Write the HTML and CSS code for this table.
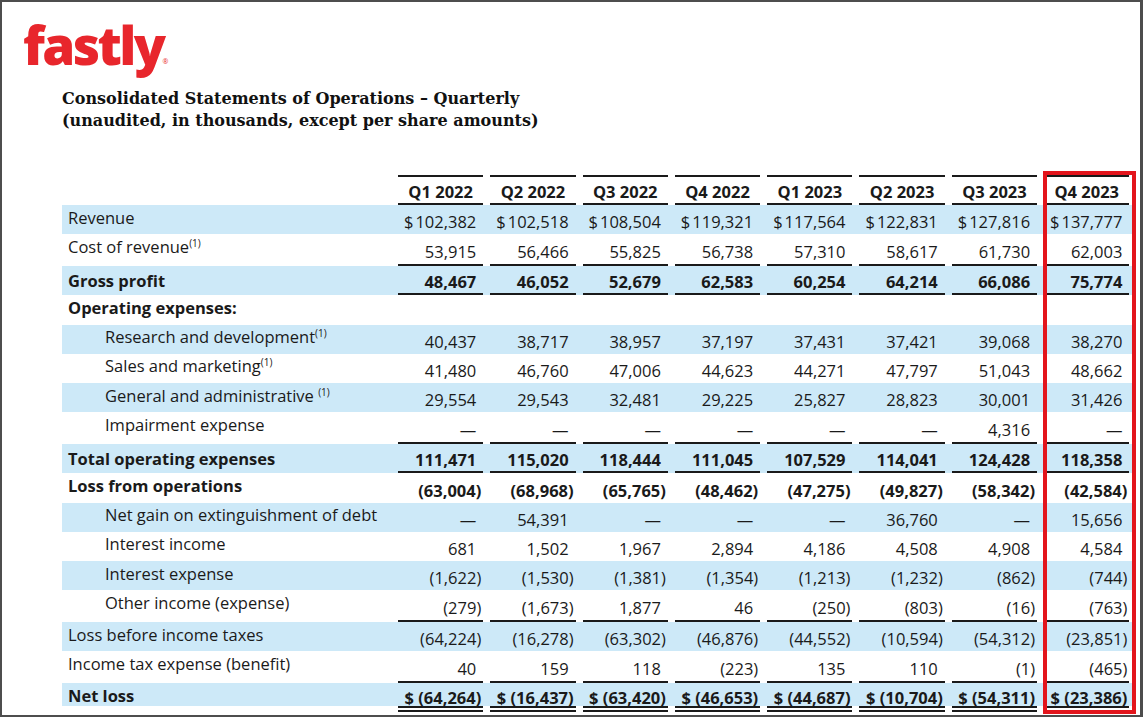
FILE: index.html
```html
<!DOCTYPE html>
<html lang="en">
<head>
<meta charset="utf-8">
<title>Fastly – Consolidated Statements of Operations – Quarterly</title>
<link rel="stylesheet" href="styles.css">
</head>
<body>
<div class="frame">
  <div class="brand"><span class="logo">fastly</span><span class="reg">®</span></div>
  <h1 class="title">Consolidated Statements of Operations – Quarterly<br>(unaudited, in thousands, except per share amounts)</h1>

  <div class="table">
    <div class="row head">
      <div></div>
      <div class="num">Q1 2022</div><div class="num">Q2 2022</div><div class="num">Q3 2022</div><div class="num">Q4 2022</div>
      <div class="num">Q1 2023</div><div class="num">Q2 2023</div><div class="num">Q3 2023</div><div class="num">Q4 2023</div>
    </div>

    <div class="row blue">
      <div class="lbl">Revenue</div>
      <div class="num"><span class="cur">$</span>102,382</div><div class="num"><span class="cur">$</span>102,518</div>
      <div class="num"><span class="cur">$</span>108,504</div><div class="num"><span class="cur">$</span>119,321</div>
      <div class="num"><span class="cur">$</span>117,564</div><div class="num"><span class="cur">$</span>122,831</div>
      <div class="num"><span class="cur">$</span>127,816</div><div class="num"><span class="cur">$</span>137,777</div>
    </div>

    <div class="row tall ul">
      <div class="lbl">Cost of revenue<sup class="fn">(1)</sup></div>
      <div class="num">53,915</div><div class="num">56,466</div><div class="num">55,825</div><div class="num">56,738</div>
      <div class="num">57,310</div><div class="num">58,617</div><div class="num">61,730</div><div class="num">62,003</div>
    </div>

    <div class="row blue ul bold sum">
      <div class="lbl">Gross profit</div>
      <div class="num">48,467</div><div class="num">46,052</div><div class="num">52,679</div><div class="num">62,583</div>
      <div class="num">60,254</div><div class="num">64,214</div><div class="num">66,086</div><div class="num">75,774</div>
    </div>

    <div class="row bold">
      <div class="lbl">Operating expenses:</div>
    </div>

    <div class="row blue">
      <div class="lbl ind">Research and development<sup class="fn">(1)</sup></div>
      <div class="num">40,437</div><div class="num">38,717</div><div class="num">38,957</div><div class="num">37,197</div>
      <div class="num">37,431</div><div class="num">37,421</div><div class="num">39,068</div><div class="num">38,270</div>
    </div>

    <div class="row">
      <div class="lbl ind">Sales and marketing<sup class="fn">(1)</sup></div>
      <div class="num">41,480</div><div class="num">46,760</div><div class="num">47,006</div><div class="num">44,623</div>
      <div class="num">44,271</div><div class="num">47,797</div><div class="num">51,043</div><div class="num">48,662</div>
    </div>

    <div class="row blue">
      <div class="lbl ind">General and administrative <sup class="fn">(1)</sup></div>
      <div class="num">29,554</div><div class="num">29,543</div><div class="num">32,481</div><div class="num">29,225</div>
      <div class="num">25,827</div><div class="num">28,823</div><div class="num">30,001</div><div class="num">31,426</div>
    </div>

    <div class="row tall ul">
      <div class="lbl ind">Impairment expense</div>
      <div class="num">—</div><div class="num">—</div><div class="num">—</div><div class="num">—</div>
      <div class="num">—</div><div class="num">—</div><div class="num">4,316</div><div class="num">—</div>
    </div>

    <div class="row blue ul bold sum">
      <div class="lbl">Total operating expenses</div>
      <div class="num">111,471</div><div class="num">115,020</div><div class="num">118,444</div><div class="num">111,045</div>
      <div class="num">107,529</div><div class="num">114,041</div><div class="num">124,428</div><div class="num">118,358</div>
    </div>

    <div class="row bold">
      <div class="lbl">Loss from operations</div>
      <div class="num"><span class="neg">(63,004)</span></div><div class="num"><span class="neg">(68,968)</span></div>
      <div class="num"><span class="neg">(65,765)</span></div><div class="num"><span class="neg">(48,462)</span></div>
      <div class="num"><span class="neg">(47,275)</span></div><div class="num"><span class="neg">(49,827)</span></div>
      <div class="num"><span class="neg">(58,342)</span></div><div class="num"><span class="neg">(42,584)</span></div>
    </div>

    <div class="row blue">
      <div class="lbl ind">Net gain on extinguishment of debt</div>
      <div class="num">—</div><div class="num">54,391</div><div class="num">—</div><div class="num">—</div>
      <div class="num">—</div><div class="num">36,760</div><div class="num">—</div><div class="num">15,656</div>
    </div>

    <div class="row">
      <div class="lbl ind">Interest income</div>
      <div class="num">681</div><div class="num">1,502</div><div class="num">1,967</div><div class="num">2,894</div>
      <div class="num">4,186</div><div class="num">4,508</div><div class="num">4,908</div><div class="num">4,584</div>
    </div>

    <div class="row blue">
      <div class="lbl ind">Interest expense</div>
      <div class="num"><span class="neg">(1,622)</span></div><div class="num"><span class="neg">(1,530)</span></div>
      <div class="num"><span class="neg">(1,381)</span></div><div class="num"><span class="neg">(1,354)</span></div>
      <div class="num"><span class="neg">(1,213)</span></div><div class="num"><span class="neg">(1,232)</span></div>
      <div class="num"><span class="neg">(862)</span></div><div class="num"><span class="neg">(744)</span></div>
    </div>

    <div class="row tall ul">
      <div class="lbl ind">Other income (expense)</div>
      <div class="num"><span class="neg">(279)</span></div><div class="num"><span class="neg">(1,673)</span></div>
      <div class="num">1,877</div><div class="num">46</div>
      <div class="num"><span class="neg">(250)</span></div><div class="num"><span class="neg">(803)</span></div>
      <div class="num"><span class="neg">(16)</span></div><div class="num"><span class="neg">(763)</span></div>
    </div>

    <div class="row blue">
      <div class="lbl">Loss before income taxes</div>
      <div class="num"><span class="neg">(64,224)</span></div><div class="num"><span class="neg">(16,278)</span></div>
      <div class="num"><span class="neg">(63,302)</span></div><div class="num"><span class="neg">(46,876)</span></div>
      <div class="num"><span class="neg">(44,552)</span></div><div class="num"><span class="neg">(10,594)</span></div>
      <div class="num"><span class="neg">(54,312)</span></div><div class="num"><span class="neg">(23,851)</span></div>
    </div>

    <div class="row tall ul">
      <div class="lbl">Income tax expense (benefit)</div>
      <div class="num">40</div><div class="num">159</div><div class="num">118</div><div class="num"><span class="neg">(223)</span></div>
      <div class="num">135</div><div class="num">110</div><div class="num"><span class="neg">(1)</span></div><div class="num"><span class="neg">(465)</span></div>
    </div>

    <div class="row net bold">
      <div class="lbl">Net loss</div>
      <div class="num"><span class="neg">$ (64,264)</span></div><div class="num"><span class="neg">$ (16,437)</span></div>
      <div class="num"><span class="neg">$ (63,420)</span></div><div class="num"><span class="neg">$ (46,653)</span></div>
      <div class="num"><span class="neg">$ (44,687)</span></div><div class="num"><span class="neg">$ (10,704)</span></div>
      <div class="num"><span class="neg">$ (54,311)</span></div><div class="num"><span class="neg">$ (23,386)</span></div>
    </div>
  </div>

  <div class="highlight"></div>
</div>
</body>
</html>
```

FILE: styles.css
```css
* { box-sizing: border-box; }

html, body {
  margin: 0;
  padding: 0;
  background: #ffffff;
}

body {
  font-family: "Open Sans", "Liberation Sans", sans-serif;
  color: #1a1a1a;
}

.frame {
  position: relative;
  width: 1143px;
  height: 717px;
  border: 2px solid #4d4d4d;
  border-right-width: 3px;
  overflow: hidden;
  background: #ffffff;
}

.brand {
  margin: 17px 0 0 21px;
  height: 52px;
  display: flex;
  align-items: flex-start;
}

.logo {
  font-family: "Open Sans", "Liberation Sans", sans-serif;
  font-weight: 800;
  font-size: 53px;
  line-height: 52px;
  letter-spacing: -2.6px;
  color: #e8262c;
}

.reg {
  font-size: 7px;
  line-height: 7px;
  color: #e8262c;
  margin: 39px 0 0 -1px;
}

.title {
  margin: 16.5px 0 0 60px;
  font-family: "DejaVu Serif", serif;
  font-weight: 700;
  font-size: 16px;
  line-height: 22px;
  color: #111111;
}

.table {
  margin: 43.5px 0 0 60px;
  width: 1073px;
}

.row {
  display: grid;
  grid-template-columns: 329px repeat(8, 85.3px);
  column-gap: 7px;
  height: 29.2px;
  font-size: 16.5px;
  line-height: 20px;
}

.row.blue { background: #cde9f8; }
.row.tall { height: 32px; }
.row.bold { font-weight: 700; }

.lbl {
  align-self: end;
  padding: 0 0 6.5px 6px;
  white-space: nowrap;
}

.lbl.ind { padding-left: 43px; }
.row.tall .lbl { padding-bottom: 9.5px; }

.num {
  display: flex;
  align-items: flex-end;
  justify-content: flex-end;
  padding: 0 7px 2px 0;
  white-space: nowrap;
}

.row.ul .num { border-bottom: 2px solid #1a1a1a; }

.row.sum .num { padding-bottom: 1px; }
.row.sum .lbl { padding-bottom: 4px; }

.cur { margin-right: 2px; }

.neg { margin-right: -5px; }

.fn {
  font-size: 10px;
  line-height: 0;
  vertical-align: 6px;
  font-weight: 400;
}

.row.head {
  height: 30px;
  font-weight: 700;
}

.row.head .num {
  border-top: 2px solid #1a1a1a;
  border-bottom: 2px solid #1a1a1a;
  justify-content: center;
  align-items: flex-end;
  padding: 0 0 1px 0;
}

.row.net {
  height: 28.6px;
  background: linear-gradient(#cde9f8, #cde9f8) top left / 100% 23px no-repeat;
}

.row.net .num {
  border-bottom: 6px double #1a1a1a;
  padding-bottom: 0;
  line-height: 17px;
}

.row.net .lbl { padding-bottom: 6px; }

.highlight {
  position: absolute;
  left: 1041px;
  top: 168.5px;
  width: 93px;
  height: 543.5px;
  border: 4px solid #e3151c;
}
```
